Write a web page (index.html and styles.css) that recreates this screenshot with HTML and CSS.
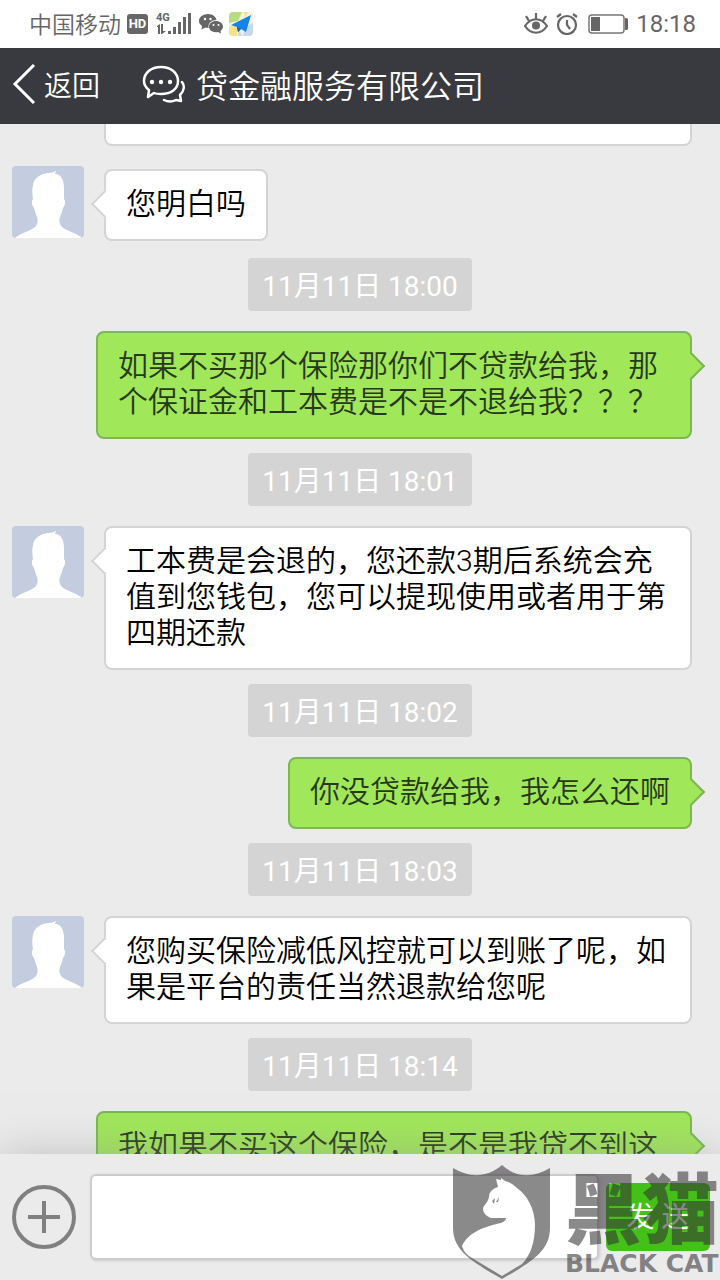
FILE: index.html
```html
<!DOCTYPE html>
<html lang="zh-CN">
<head>
  <meta charset="utf-8">
  <meta name="viewport" content="width=device-width, initial-scale=1">
  <title>贷金融服务有限公司</title>
  <link rel="stylesheet" href="styles.css">
</head>
<body>
  <svg class="defs" width="0" height="0" aria-hidden="true">
    <symbol id="avatar" viewBox="0 0 72 72">
      <path fill="#fff" d="M3 72C8 67 20 65 24 60C26 57 26 54 25 51C24 49 23 46 22 42C20 40 19 35 21 33C20 28 20 23 21 19C22 12 28 8 36 7C39 7 42 6 44 5L43 8L45 8C50 10 52 15 52 22C52 26 52 30 52 33C54 35 53 40 51 42C50 46 49 49 48 51C47 54 47 58 50 61C55 65 65 67 70 72Z"/>
    </symbol>
  </svg>

  <div class="app">
    <div class="status-bar">
      <span class="carrier">中国移动</span>
      <span class="hd">HD</span>
      <svg class="signal" width="36" height="24" viewBox="0 0 36 24" fill="#666">
        <text x="0" y="9" class="signal-text">4G</text>
        <path d="M1 14l3-2v10H2v-7H1zM5 12h2v7h3l-4 3H5zM12 19h3v3h-3zM17 15h3v7h-3zM22 10h3v12h-3zM27 5h3v17h-3zM32 1h3v21h-3z"/>
      </svg>
      <svg class="wechat" width="24" height="20" viewBox="0 0 24 20">
        <path fill="#666" d="M9 0c5 0 8 3 8.500 6-5 0-8 3-8 6.500v1.500l-3-.5L2.500 15.500 3 12C1 10.500 0 9 0 7c0-4 4-7 9-7z"/>
        <path fill="#666" d="M17 7c4 0 7 2.500 7 5.500 0 2-1 3-2.500 4.500l.5 2.500-3-1.500c-5 1-9-1.500-9-5.500C10 9.500 13 7 17 7z"/>
        <g fill="#fff"><circle cx="6" cy="5" r="1.200"/><circle cx="11.500" cy="5" r="1.200"/><circle cx="14.500" cy="11" r="1"/><circle cx="19.500" cy="11" r="1"/></g>
      </svg>
      <svg class="map" width="24" height="24" viewBox="0 0 24 24">
        <rect width="24" height="24" rx="4" fill="#f4f1dc"/>
        <path fill="#b9dc83" d="M0 4a4 4 0 0 1 4-4h9l-4 9-9 2z"/>
        <path fill="#ffe08a" d="M0 15l8-3v12H4a4 4 0 0 1-4-4zM15 0h4l-3 6z"/>
        <path fill="#c6d9f3" d="M16 15l8-4v9a4 4 0 0 1-4 4h-6zM9 14l4 10H9z"/>
        <path fill="#1583e6" d="M2 13L22 3l-5 17-5-3-3 3-1-5z"/>
        <path fill="#0b62b5" d="M8 15l4 2-3 3z"/>
      </svg>
      <div class="status-right">
        <svg width="24" height="22" viewBox="0 0 24 22" fill="none" stroke="#666" stroke-width="2.200">
          <path d="M1 13c6-9 16-9 22 0-6 9-16 9-22 0zM12 6V0M5 8L2 3M19 8l3-5"/>
          <circle cx="12" cy="12.500" r="4" fill="#666" stroke="none"/>
        </svg>
        <svg width="22" height="22" viewBox="0 0 22 22" fill="none" stroke="#666" stroke-width="2.200">
          <circle cx="11" cy="12" r="9"/>
          <path d="M11 7v5l3 4M1 4l4-3M21 4l-4-3"/>
        </svg>
        <svg class="battery" width="40" height="20" viewBox="0 0 40 20">
          <rect x="1" y="1" width="35" height="18" rx="3" fill="#fff" stroke="#777" stroke-width="1.500"/>
          <path fill="#666" d="M3 3h9v14H3zM37 4h1q2 0 2 1.500v9q0 1.500-2 1.500h-1z"/>
        </svg>
        <span class="clock">18:18</span>
      </div>
    </div>

    <header class="header">
      <a class="back" href="#">
        <svg width="24" height="40" viewBox="0 0 24 40" fill="none" stroke="#fff" stroke-width="3"><path d="M22 1L3 20l19 19"/></svg>
        返回
      </a>
      <h1 class="title">
        <svg width="44" height="38" viewBox="0 0 44 38" fill="none" stroke="#fff" stroke-width="2.500" stroke-linecap="round" stroke-linejoin="round">
          <path d="M6 32L7 25C3 22 2 19 2 16C2 8 9 2 19 2S36 8 36 16S29 29 19 29C17 29 14 29 12 28ZM40 17C43 21 42 26 38 30L39 36L34 35C30 37 26 37 22 35"/>
          <g fill="#fff" stroke="none"><circle cx="10" cy="17" r="2.200"/><circle cx="19" cy="17" r="2.200"/><circle cx="28" cy="17" r="2.200"/></g>
        </svg>
        贷金融服务有限公司
      </h1>
    </header>

    <main class="chat">
      <div class="previous"></div>

      <div class="row">
        <svg class="avatar"><use href="#avatar"/></svg>
        <div class="bubble">您明白吗</div>
      </div>

      <time class="time">11月11日 18:00</time>

      <div class="row mine">
        <div class="bubble">如果不买那个保险那你们不贷款给我，那个保证金和工本费是不是不退给我？？？</div>
      </div>

      <time class="time">11月11日 18:01</time>

      <div class="row">
        <svg class="avatar"><use href="#avatar"/></svg>
        <div class="bubble">工本费是会退的，您还款3期后系统会充值到您钱包，您可以提现使用或者用于第四期还款</div>
      </div>

      <time class="time">11月11日 18:02</time>

      <div class="row mine">
        <div class="bubble">你没贷款给我，我怎么还啊</div>
      </div>

      <time class="time">11月11日 18:03</time>

      <div class="row">
        <svg class="avatar"><use href="#avatar"/></svg>
        <div class="bubble">您购买保险减低风控就可以到账了呢，如果是平台的责任当然退款给您呢</div>
      </div>

      <time class="time">11月11日 18:14</time>

      <div class="row mine full">
        <div class="bubble">我如果不买这个保险，是不是我贷不到这</div>
      </div>
    </main>

    <form class="composer">
      <button class="add" type="button" aria-label="更多">
        <svg width="64" height="64" viewBox="0 0 64 64" fill="none" stroke="#808080" stroke-width="4"><circle cx="32" cy="32" r="30"/><path d="M16 32h32M32 16v32"/></svg>
      </button>
      <input class="message" type="text" aria-label="消息">
      <button class="send" type="submit">发 送</button>

      <div class="watermark">
        <svg width="98" height="115" viewBox="0 0 98 115">
          <path fill="#353235" fill-rule="evenodd" d="M0 3C16 13 34 13 49 0C63 13 81 13 97 3V62C97 84 84 94 49 114C14 94 0 84 0 62ZM43 14L45 22C39 24 36 27 36 32C35 37 32 39 30 43C30 48 33 51 38 53L53 53C53 55 51 57 48 58C34 61 16 66 9 81C11 87 14 90 19 93L49 111L69 99C78 90 82 76 82 60C82 44 74 30 64 23C60 19 56 17 52 16L48 13L48 15Z"/>
          <path fill="#353235" d="M39 36L42 33L41 39ZM43 37L46 32L45 37Z"/>
        </svg>
        <div class="brand">
          <span class="brand-cn">黑猫</span>
          <span class="brand-en">BLACK CAT</span>
        </div>
      </div>
    </form>
  </div>
</body>
</html>
```
FILE: styles.css
```css
* {
  box-sizing: border-box;
}

body {
  margin: 0;
  font-family: Roboto, "Noto Sans CJK SC", sans-serif;
  background: #ebebeb;
}

button,
input {
  font-family: inherit;
}

.defs {
  position: absolute;
}

.app {
  display: flex;
  flex-direction: column;
  height: 100vh;
}

/* status bar */

.status-bar {
  display: flex;
  align-items: center;
  flex: none;
  height: 48px;
  padding: 0 24px 0 29px;
  background: #fff;
  color: #666;
}

.carrier {
  padding-bottom: 2px;
  font-size: 23px;
  font-weight: 350;
}

.hd {
  width: 21px;
  margin-left: 6px;
  border-radius: 3px;
  background: #666;
  color: #fff;
  font-size: 13px;
  font-weight: 700;
  line-height: 20px;
  text-align: center;
}

.signal {
  margin-left: 8px;
}

.signal-text {
  font-size: 11px;
  font-weight: 700;
}

.wechat {
  margin-left: 7px;
}

.map {
  margin-left: 6px;
}

.status-right {
  display: flex;
  align-items: center;
  gap: 8px;
  margin-left: auto;
}

.battery {
  margin-left: 2px;
}

.clock {
  font-size: 24px;
}

/* header */

.header {
  display: flex;
  align-items: center;
  flex: none;
  height: 76px;
  padding: 0 12px 4px;
  background: #393a3f;
  color: #fff;
}

.back {
  display: flex;
  align-items: center;
  gap: 8px;
  color: #fff;
  font-size: 28px;
  font-weight: 350;
  text-decoration: none;
}

.title {
  display: flex;
  align-items: center;
  gap: 10px;
  margin: 0 0 0 42px;
  font-size: 32px;
  font-weight: 350;
}

/* messages */

.chat {
  display: flex;
  flex-direction: column;
  flex: 1;
  min-height: 0;
  overflow: hidden;
}

.previous {
  flex: none;
  height: 22px;
  margin: 0 28px 20px 104px;
  border: 2px solid #d4d4d4;
  border-top: 0;
  border-radius: 0 0 8px 8px;
  background: #fff;
}

.row {
  display: flex;
  align-items: center;
  flex: none;
  gap: 20px;
  min-height: 78px;
  padding: 0 28px 0 12px;
}

.row.mine {
  justify-content: flex-end;
  min-height: 72px;
  padding-left: 96px;
}

.row.full .bubble {
  flex: 1;
}

.avatar {
  flex: none;
  align-self: flex-start;
  width: 72px;
  height: 72px;
  border-radius: 4px;
  background: #c4cce0;
}

.bubble {
  position: relative;
  padding: 15px 20px 17px;
  border: 2px solid #d4d4d4;
  border-radius: 8px;
  background: #fff;
  color: #000;
  font-size: 30px;
  font-weight: 350;
  line-height: 36px;
}

.bubble::before {
  content: "";
  position: absolute;
  top: 23px;
  left: -11px;
  width: 18px;
  height: 18px;
  border: solid #d4d4d4;
  border-width: 0 0 2px 2px;
  background: #fff;
  transform: rotate(45deg);
}

.mine .bubble {
  border-color: #7cb655;
  background: #a0e75a;
  color: #28391a;
}

.mine .bubble::before {
  right: -11px;
  left: auto;
  border-color: #7cb655;
  border-width: 2px 2px 0 0;
  background: #a0e75a;
}

.time {
  flex: none;
  align-self: center;
  margin: 14px 0 20px;
  padding: 10px 14px 6px;
  border-radius: 4px;
  background: #d4d4d4;
  color: #fff;
  font-size: 28px;
  line-height: 37px;
}

/* composer */

.composer {
  position: relative;
  display: flex;
  align-items: center;
  flex: none;
  height: 126px;
  padding: 0 10px 0 12px;
  background: #ebebeb;
  box-shadow: 0 0 40px rgba(150, 150, 150, 0.5);
}

.add {
  flex: none;
  width: 64px;
  height: 64px;
  padding: 0;
  border: 0;
  background: none;
}

.message {
  flex: 1;
  min-width: 0;
  height: 86px;
  margin: 0 7px 0 14px;
  padding: 0 16px;
  border: 2px solid #ccc;
  border-radius: 6px;
  background: #fff;
  box-shadow: 1px 1px 3px #ccc;
  font-size: 30px;
}

.send {
  flex: none;
  width: 104px;
  height: 68px;
  padding: 0 0 4px;
  border: 0;
  border-radius: 6px;
  background: #44c119;
  color: #fff;
  font-size: 28px;
}

.watermark {
  position: absolute;
  right: 1px;
  bottom: 0;
  display: flex;
  align-items: flex-end;
  gap: 14px;
  opacity: 0.57;
  pointer-events: none;
}

.brand {
  display: flex;
  flex-direction: column;
  color: #353235;
}

.brand-cn {
  font-family: "Noto Sans CJK SC", sans-serif;
  font-size: 77px;
  font-weight: 900;
  line-height: 86px;
}

.brand-en {
  font-family: "DejaVu Sans", sans-serif;
  font-size: 25px;
  font-weight: 700;
  line-height: 32px;
  white-space: nowrap;
}
```
